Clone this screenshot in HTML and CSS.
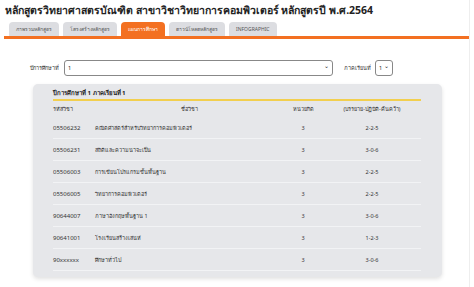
FILE: index.html
```html
<!DOCTYPE html>
<html lang="th">
<head>
  <meta charset="UTF-8">
  <meta name="viewport" content="width=device-width, initial-scale=1.0">
  <title>แผนการศึกษา</title>
  <link rel="stylesheet" href="styles.css">
</head>
<body>
  <div class="page">
    <h1 class="title">หลักสูตรวิทยาศาสตรบัณฑิต สาขาวิชาวิทยาการคอมพิวเตอร์ หลักสูตรปี พ.ศ.2564</h1>

    <div class="tabs">
      <button class="tab">ภาพรวมหลักสูตร</button>
      <button class="tab">โครงสร้างหลักสูตร</button>
      <button class="tab active">แผนการศึกษา</button>
      <button class="tab">ดาวน์โหลดหลักสูตร</button>
      <button class="tab">INFOGRAPHIC</button>
    </div>

    <div class="content">
      <div class="filters">
        <label class="filter-label">ปีการศึกษาที่</label>
        <div class="select wide"><span>1</span><span class="caret">&#8964;</span></div>
        <label class="filter-label term">ภาคเรียนที่</label>
        <div class="select small"><span>1</span><span class="caret">&#8964;</span></div>
      </div>

      <div class="plan-card">
        <div class="plan-title">ปีการศึกษาที่ 1 ภาคเรียนที่ 1</div>
        <table class="plan-table">
          <thead>
            <tr>
              <th class="col-code">รหัสวิชา</th>
              <th class="col-name">ชื่อวิชา</th>
              <th class="col-credit">หน่วยกิต</th>
              <th class="col-hours">(บรรยาย-ปฏิบัติ-ค้นคว้า)</th>
            </tr>
          </thead>
          <tbody>
            <tr><td>05506232</td><td class="name">คณิตศาสตร์สำหรับวิทยาการคอมพิวเตอร์</td><td>3</td><td>2-2-5</td></tr>
            <tr><td>05506231</td><td class="name">สถิติและความน่าจะเป็น</td><td>3</td><td>3-0-6</td></tr>
            <tr><td>05506003</td><td class="name">การเขียนโปรแกรมขั้นพื้นฐาน</td><td>3</td><td>2-2-5</td></tr>
            <tr><td>05506005</td><td class="name">วิทยาการคอมพิวเตอร์</td><td>3</td><td>2-2-5</td></tr>
            <tr><td>90644007</td><td class="name">ภาษาอังกฤษพื้นฐาน 1</td><td>3</td><td>3-0-6</td></tr>
            <tr><td>90641001</td><td class="name">โรงเรียนสร้างเสน่ห์</td><td>3</td><td>1-2-3</td></tr>
            <tr><td>90xxxxxx</td><td class="name">ศึกษาทั่วไป</td><td>3</td><td>3-0-6</td></tr>
          </tbody>
        </table>
      </div>
    </div>
  </div>
</body>
</html>
```

FILE: styles.css
```css
body {
  margin: 0;
  padding: 0;
  background-color: #ffffff;
  font-family: "Noto Sans", "DejaVu Sans", sans-serif;
  color: #333333;
}

.page {
  width: 466px;
  margin-left: 4px;
  border-right: 1px solid #eeeeee;
  min-height: 287px;
  box-sizing: border-box;
}

.title {
  margin: 0;
  padding: 3px 0 0 1px;
  font-size: 10.5px;
  line-height: 14px;
  font-weight: bold;
  color: #222222;
}

.tabs {
  display: flex;
  gap: 4px;
  padding-left: 5px;
  margin-top: 5px;
  border-bottom: 3px solid #f37021;
}

.tab {
  background-color: #dcdde1;
  border: none;
  border-radius: 4px 4px 0 0;
  padding: 0 7px;
  height: 14px;
  font-family: inherit;
  font-size: 5px;
  color: #555555;
  cursor: pointer;
}

.tab.active {
  background-color: #f37021;
  color: #ffffff;
}

.content {
  padding: 20px 27px 0 29px;
}

.filters {
  display: flex;
  align-items: center;
  margin-left: -3px;
  height: 17px;
}

.filter-label {
  font-size: 5.5px;
  color: #333333;
  margin-right: 5px;
}

.filter-label.term {
  margin-left: 11px;
  margin-right: 4px;
}

.select {
  display: flex;
  justify-content: space-between;
  align-items: center;
  height: 16px;
  box-sizing: border-box;
  border: 1px solid #888888;
  border-radius: 3px;
  padding: 0 3px 0 3px;
  font-size: 5.5px;
  color: #222222;
}

.select.wide {
  width: 269px;
}

.select.small {
  width: 18px;
}

.caret {
  font-size: 6px;
  line-height: 6px;
  margin-top: -3px;
}

.plan-card {
  margin-top: 8px;
  background-color: #e6e7ea;
  border-radius: 5px;
  box-shadow: 0 2px 4px rgba(0, 0, 0, 0.12);
  padding: 5px 21px 10px 20px;
  height: 193px;
  box-sizing: border-box;
}

.plan-title {
  font-size: 6px;
  font-weight: bold;
  color: #222222;
  line-height: 9px;
  padding-bottom: 1px;
  border-bottom: 2px solid #f2cf4f;
}

.plan-table {
  width: 100%;
  table-layout: fixed;
  border-collapse: collapse;
  font-size: 5.5px;
  line-height: 8px;
  color: #333333;
}

.plan-table th {
  font-weight: normal;
  height: 16px;
  padding: 0;
  text-align: center;
}

.plan-table th.col-code {
  text-align: left;
  width: 42px;
}

.plan-table th.col-credit {
  width: 40px;
}

.plan-table th.col-hours {
  width: 98px;
}

.plan-table td {
  height: 21px;
  padding: 0;
  text-align: center;
  border-bottom: 1px solid #f2f3f5;
}

.plan-table td:first-child {
  font-size: 6px;
}

.plan-table td:first-child,
.plan-table td.name {
  text-align: left;
}
```
